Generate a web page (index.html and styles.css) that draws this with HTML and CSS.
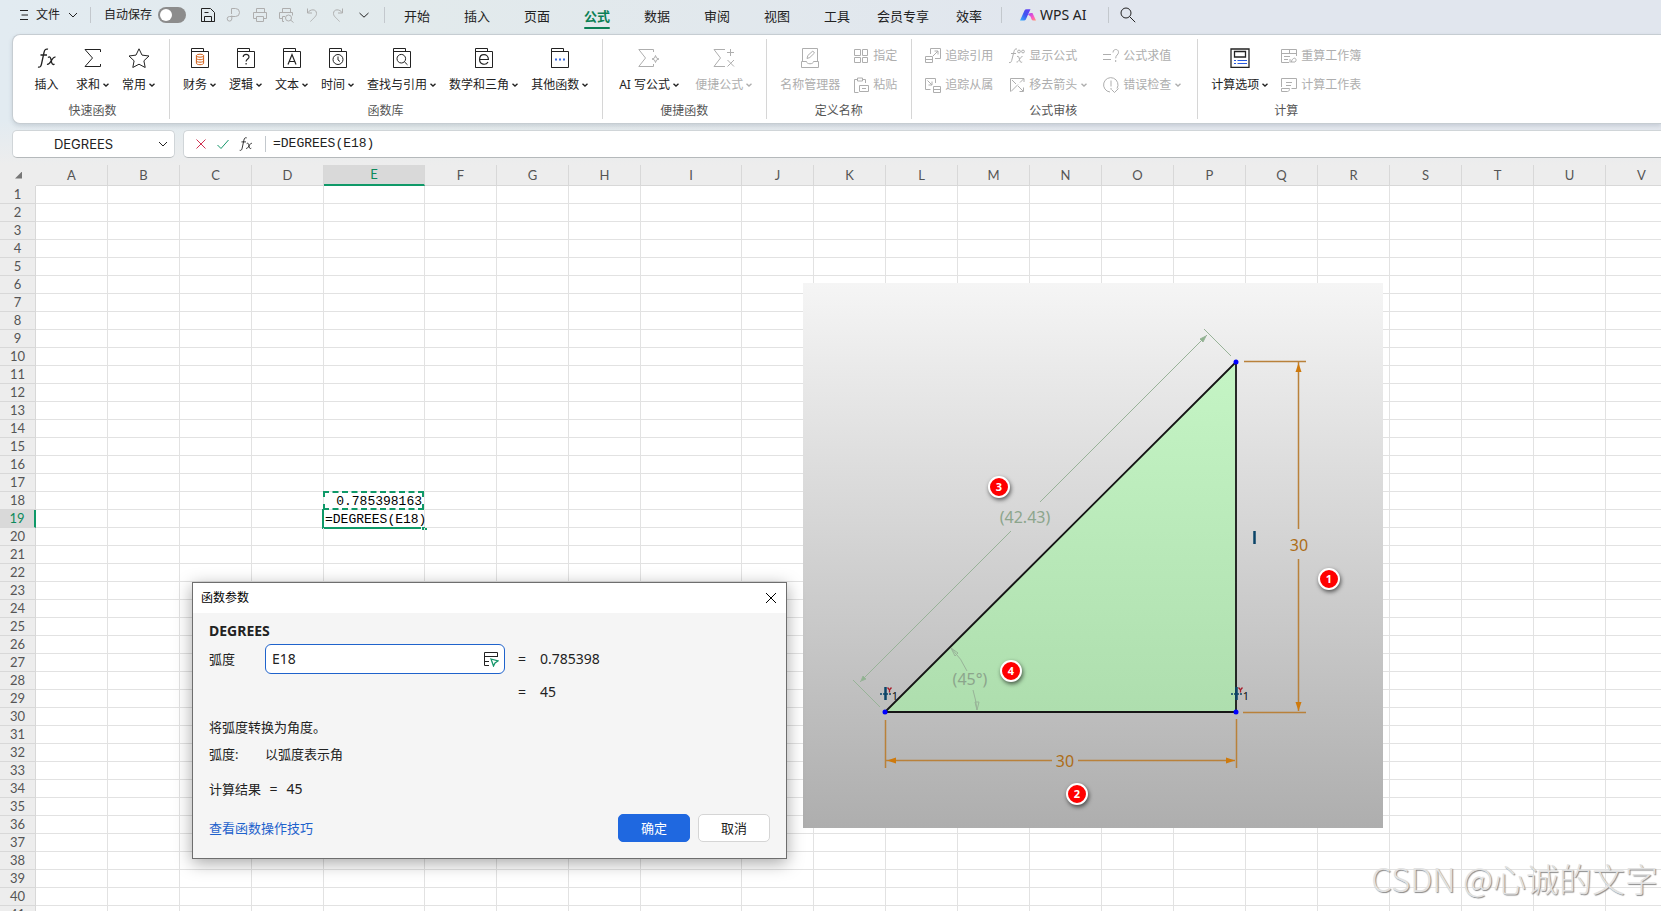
FILE: index.html
```html
<!DOCTYPE html>
<html lang="zh-CN">
<head>
    <meta charset="UTF-8">
    <meta name="viewport" content="width=device-width, initial-scale=1.0">
    <title>WPS 表格</title>
    <link rel="stylesheet" href="styles.css">
</head>
<body>

    <!-- Icon sprite -->
    <svg class="sprite" aria-hidden="true">
        <symbol id="i-down" viewBox="0 0 10 6"><path d="M1 1l4 4 4-4"/></symbol>
        <symbol id="i-caret" viewBox="0 0 6 4"><path d="M.5 .8L3 3 5.5 .8" stroke-width="1.4"/></symbol>
        <symbol id="i-book" viewBox="0 0 20 20"><path d="M1.500 19.500V.5h12v3M1.500 3.500h17v16h-17z"/></symbol>
        <symbol id="i-sigma" viewBox="0 0 20 20"><path d="M17.500 4V1.500H2L9.500 10 2 18.500h15.500V16"/></symbol>
        <symbol id="i-fx" viewBox="0 0 20 20"><path d="M1 19c2 .6 3-.6 3.500-3L7 4.500C7.500 2 8.600.5 11 1.200M3.500 7h6.500M11 9.500c2-1.500 2.700 0 3.200 3 .5 3 1.300 5 3.300 3.500M18.500 9.200c-1.500-.6-2.500.6-4.300 3.600-1.600 2.700-2.500 4-4.200 3.400" stroke-width="1.300"/></symbol>
    </svg>

    <!-- Menu bar -->
    <header class="menubar">
        <button class="file-btn">
            <svg class="ic-menu" viewBox="0 0 8 12"><path d="M0 1.500h8M1.500 6H8M0 10.500h8"/></svg>
            文件
            <svg class="ic-down" viewBox="0 0 10 6"><use href="#i-down"/></svg>
        </button>
        <span class="divider"></span>
        <label class="autosave">自动保存 <input type="checkbox" class="switch"></label>
        <div class="quick">
            <button aria-label="保存"><svg viewBox="0 0 16 16"><path d="M1.500 14.500v-13h9l4 4v9zM4.500 14v-4.500h7V14M4.500 5.500h4M1.500 14.500h13"/></svg></button>
            <button aria-label="导出" disabled><svg viewBox="0 0 16 16"><path d="M5.500 7V1.500h4a3.500 3.500 0 010 8h-6a2.300 2.300 0 102.300 2.500V8.500"/></svg></button>
            <button aria-label="打印" disabled><svg viewBox="0 0 16 16"><path d="M4.500 5V1.500h8V5M4 11.500H1.500v-6h13v6H12M4.500 9.500h7v5h-7z"/></svg></button>
            <button aria-label="打印预览" disabled><svg viewBox="0 0 16 16"><path d="M4.500 5V1.500h8V5M4.500 11.500h-3v-6h13v3M6 14.500H4.500v-5H7"/><circle cx="10.500" cy="11" r="3"/><path d="M12.500 13l3 2.500"/></svg></button>
            <button aria-label="撤销" disabled><svg viewBox="0 0 16 16"><path d="M3.500 1.500v4.500H8M3.700 5.800C6 2 12.500 1.500 12.500 6.500c0 3-3.500 5-6 8"/></svg></button>
            <button aria-label="恢复" disabled><svg viewBox="0 0 16 16"><path d="M12.500 1.500v4.500H8M12.300 5.800C10 2 3.500 1.500 3.500 6.500c0 3 3.500 5 6 8"/></svg></button>
            <button aria-label="更多"><svg viewBox="0 0 16 16"><path d="M3.500 6L8 10.200 12.500 6"/></svg></button>
        </div>
        <span class="divider"></span>
        <nav class="tabs">
            <button>开始</button>
            <button>插入</button>
            <button>页面</button>
            <button class="active">公式</button>
            <button>数据</button>
            <button>审阅</button>
            <button>视图</button>
            <button>工具</button>
            <button>会员专享</button>
            <button>效率</button>
        </nav>
        <span class="divider"></span>
        <button class="ai-btn">
            <svg viewBox="0 0 16 12">
                <defs>
                    <linearGradient id="ai1" x1="0" y1="1" x2="1" y2="0"><stop offset="0" stop-color="#36b4ff"/><stop offset=".5" stop-color="#3f55f0"/><stop offset="1" stop-color="#6a3df5"/></linearGradient>
                    <linearGradient id="ai2" x1="0" y1="0" x2="1" y2="1"><stop offset="0" stop-color="#a43df5"/><stop offset=".6" stop-color="#ff5cc0"/><stop offset="1" stop-color="#ff9a6a"/></linearGradient>
                </defs>
                <path d="M0 11.500L4.500 1.500Q5 .3 6.500.3h4L5.800 10.500q-.5 1-1.800 1z" fill="url(#ai1)" stroke="none"/>
                <path d="M8 5.500q1-1.500 3-1.500h1.500L16 11.500h-2.500q-1.500 0-2-1.300L10.500 7.500z" fill="url(#ai2)" stroke="none"/>
            </svg>
            WPS AI
        </button>
        <span class="divider"></span>
        <button class="search-btn" aria-label="搜索"><svg viewBox="0 0 16 16"><circle cx="6" cy="6" r="5"/><path d="M9.700 9.700l5.500 5.500"/></svg></button>
    </header>

    <!-- Ribbon -->
    <section class="ribbon">
        <div class="group">
            <div class="group-items">
                <button class="big"><svg class="ic"><use href="#i-fx"/></svg><span>插入</span></button>
                <button class="big"><svg class="ic"><use href="#i-sigma"/></svg><span>求和<svg class="caret"><use href="#i-caret"/></svg></span></button>
                <button class="big"><svg class="ic wide-ic" viewBox="0 0 22 20"><path d="M11 .8l3 6.300 7 .9-5.100 4.800 1.300 6.700L11 16.200l-6.200 3.300 1.300-6.700L1 8l7-.9z"/></svg><span>常用<svg class="caret"><use href="#i-caret"/></svg></span></button>
            </div>
            <div class="group-name">快速函数</div>
        </div>
        <div class="group">
            <div class="group-items">
                <button class="big"><svg class="ic" viewBox="0 0 20 20"><use href="#i-book"/><g stroke="#d2601a"><ellipse cx="10" cy="7.700" rx="3.600" ry="1.500"/><path d="M6.400 7.700v7.500c0 2 7.200 2 7.200 0V7.700M6.400 10.200c0 2 7.200 2 7.200 0M6.400 12.700c0 2 7.200 2 7.200 0"/></g></svg><span>财务<svg class="caret"><use href="#i-caret"/></svg></span></button>
                <button class="big"><svg class="ic" viewBox="0 0 20 20"><use href="#i-book"/><path d="M7.200 9c0-3.500 5.800-3.500 5.800 0 0 2-2.900 2-2.900 4.500M10.100 15v1.500" stroke-width="1.200"/></svg><span>逻辑<svg class="caret"><use href="#i-caret"/></svg></span></button>
                <button class="big"><svg class="ic" viewBox="0 0 20 20"><use href="#i-book"/><path d="M6 16.500l4-10 4 10M7.300 13.500h5.400" stroke-width="1.200"/></svg><span>文本<svg class="caret"><use href="#i-caret"/></svg></span></button>
                <button class="big"><svg class="ic" viewBox="0 0 20 20"><use href="#i-book"/><circle cx="10" cy="11.500" r="5"/><path d="M10 8.500v3.500l2 1.500"/></svg><span>时间<svg class="caret"><use href="#i-caret"/></svg></span></button>
                <button class="big"><svg class="ic" viewBox="0 0 20 20"><use href="#i-book"/><circle cx="9.300" cy="10.700" r="4.300"/><path d="M12.400 13.800l3.100 3"/></svg><span>查找与引用<svg class="caret"><use href="#i-caret"/></svg></span></button>
                <button class="big"><svg class="ic" viewBox="0 0 20 20"><use href="#i-book"/><path d="M5.600 11.500h8.800c0-6.500-8.800-6.500-8.800 0 0 5.500 6.500 6 8.400 2.500" stroke-width="1.200"/></svg><span>数学和三角<svg class="caret"><use href="#i-caret"/></svg></span></button>
                <button class="big"><svg class="ic" viewBox="0 0 20 20"><use href="#i-book"/><path d="M5 11.500h2m2 0h2m2 0h2" stroke="#3b6be0" stroke-width="2"/></svg><span>其他函数<svg class="caret"><use href="#i-caret"/></svg></span></button>
            </div>
            <div class="group-name">函数库</div>
        </div>
        <div class="group">
            <div class="group-items">
                <button class="big ai-write"><svg class="ic wide-ic off" viewBox="0 0 22 20"><path d="M15.500 4V1.500H.8L7.500 10 .8 18.500h14.700V16M17.500 7.500l1 2.500 2.500 1-2.500 1-1 2.500-1-2.500-2.500-1 2.500-1z"/></svg><span>AI 写公式<svg class="caret"><use href="#i-caret"/></svg></span></button>
                <button class="big" disabled><svg class="ic wide-ic" viewBox="0 0 22 20"><path d="M12 1.500H1L7.500 10 1 18.500h11M17.500 1v7M14 4.500h7M14.500 12l6.500 6.500M21 12l-6.500 6.500"/></svg><span>便捷公式<svg class="caret"><use href="#i-caret"/></svg></span></button>
            </div>
            <div class="group-name">便捷函数</div>
        </div>
        <div class="group">
            <div class="group-items">
                <button class="big" disabled><svg class="ic" viewBox="0 0 20 20"><path d="M2.500 13V.5h15V13M1.500 13.500h5c0 3 7 3 7 0h5v6h-17zM7 10.500l.8-3 5-4.500 1.700 2-4.700 4.500z"/></svg><span>名称管理器</span></button>
                <div class="stack">
                    <button class="small" disabled><svg viewBox="0 0 16 16"><path d="M1.500 1.500h6v6h-6zM9.500 1.500h5v6h-5zM1.500 9.500h6v5h-6zM9.500 9.500h5v5h-5z"/></svg>指定</button>
                    <button class="small" disabled><svg viewBox="0 0 16 16"><path d="M5.500 15.500h-4v-13h3M4.500 1h5v3h-5zM10 2.500h2.500V6M6.500 8.500h9v6h-9zM9 11.500h4"/></svg>粘贴</button>
                </div>
            </div>
            <div class="group-name">定义名称</div>
        </div>
        <div class="group audit">
            <div class="group-items">
                <div class="stack">
                    <button class="small" disabled><svg viewBox="0 0 16 16"><path d="M5.500 6V.5h10v10H10M.5 8.500h7v6h-7zM.5 11.500h7M8 8l5-5M9.500 3H13v3.500"/></svg>追踪引用</button>
                    <button class="small" disabled><svg viewBox="0 0 16 16"><path d="M5.500 12.500h-5V1.500h10V6M8.500 9.500h7v6h-7zM8.500 12.500h7M2.500 3.500l4.500 4.500M7 4.500V8H3.500"/></svg>追踪从属</button>
                </div>
                <div class="stack">
                    <button class="small" disabled><svg viewBox="0 0 16 16"><path d="M0 14.500c1.600.5 2.300-.5 2.700-2L5 3.500C5.500 1.500 6.300.6 8 1M2 5.500h5M8 8.500c1.800-.8 2 .8 2.500 3s1 3.500 2.700 2.500M13.500 8.500c-2-.5-4 6.500-6 5.500"/><circle cx="10" cy="3.500" r="1.400"/><circle cx="14" cy="3.500" r="1.400"/></svg>显示公式</button>
                    <button class="small" disabled><svg viewBox="0 0 16 16"><path d="M15 1.500H1.500v13M3 3l4 4M9 9l5 5M14.500 10.500v4h-4M14.500 2L11 5.500M9 7.500L2 14.500M15 5V1.500"/></svg>移去箭头<svg class="caret"><use href="#i-caret"/></svg></button>
                </div>
                <div class="stack">
                    <button class="small" disabled><svg viewBox="0 0 16 16"><path d="M0 6.500h8M0 11.500h8M10 4.500C10 .5 15.500.5 15.500 4.300c0 2.700-2.800 2.500-2.800 6M12.700 12v2"/></svg>公式求值</button>
                    <button class="small" disabled><svg viewBox="0 0 16 16"><path d="M7 15A7.200 7.200 0 1114 11.500M8 3.500v6M8 11v1.500M8.500 12.500l3 3 4-4"/></svg>错误检查<svg class="caret"><use href="#i-caret"/></svg></button>
                </div>
            </div>
            <div class="group-name">公式审核</div>
        </div>
        <div class="group">
            <div class="group-items">
                <button class="big"><svg class="ic" viewBox="0 0 20 20"><path d="M1 1h18v18.500H1zM4.500 3.500h11v5.500h-11z" stroke-width="1.300"/><path d="M4 12.500h2m1.500 0H17M4 15.500h2m1.500 0H17" stroke="#2a5be0"/></svg><span>计算选项<svg class="caret"><use href="#i-caret"/></svg></span></button>
                <div class="stack">
                    <button class="small" disabled><svg viewBox="0 0 16 16"><path d="M8 14.500H.5V1.500h15V8M.5 5.500h15M8.500 1.500v4M3 8.500h6M3 11.500h4M9.500 14h4.500c2-1 1-5-1.500-3.500-1.500 1-2 2-2 3.500M9 11v3.500"/></svg>重算工作簿</button>
                    <button class="small" disabled><svg viewBox="0 0 16 16"><path d="M.5 10V1.500h15v10h-5M.5 11.500h8c0 1.500-.5 3-2 3h-6zM5 5.500h6M5 8.500h5"/></svg>计算工作表</button>
                </div>
            </div>
            <div class="group-name">计算</div>
        </div>
    </section>

    <!-- Formula bar -->
    <section class="formula-row">
        <button class="name-box"><span>DEGREES</span><svg class="ic-down" viewBox="0 0 10 6"><use href="#i-down"/></svg></button>
        <div class="formula-bar">
            <button aria-label="取消输入"><svg viewBox="0 0 12 12" class="red"><path d="M1.500 1.500l9 9M10.500 1.500l-9 9"/></svg></button>
            <button aria-label="确认输入"><svg viewBox="0 0 12 12" class="green"><path d="M.5 7l3.500 3.500L11.500 2"/></svg></button>
            <button aria-label="插入函数"><svg viewBox="0 0 20 20" class="fx"><use href="#i-fx"/></svg></button>
            <span class="divider"></span>
            <input type="text" aria-label="公式" value="=DEGREES(E18)">
        </div>
    </section>

    <!-- Worksheet -->
    <main class="workspace">
        <table class="sheet">
            <colgroup id="cols"></colgroup>
            <thead id="sheet-head"></thead>
            <tbody id="sheet-body"></tbody>
        </table>

        <!-- Picture placed on the sheet -->
        <svg class="drawing" viewBox="0 0 580 545">
            <defs>
                <linearGradient id="bg" x1="0" y1="0" x2="0" y2="1"><stop offset="0" stop-color="#f5f5f5"/><stop offset="1" stop-color="#aeaeae"/></linearGradient>
                <linearGradient id="fill" x1="0" y1="0" x2="0" y2="1"><stop offset="0" stop-color="#c5f5c5"/><stop offset="1" stop-color="#aedeae"/></linearGradient>
            </defs>
            <rect width="580" height="545" fill="url(#bg)" stroke="none"/>
            <path d="M82 429L433 79V429z" fill="url(#fill)" stroke="#151515" stroke-width="1.800"/>

            <g class="dim-ref">
                <path d="M57 399L208 248M237 219L404 52M401 46l27 27M50 397l27 27"/>
                <path d="M403 53l-6 3 3 3zM58 398l2-5 3 3z" fill="#8fb48f"/>
                <path d="M148 365q11 11 16 23M170 407q3 10 4 20M148 365l4 8 3-3zM174 427l-2-8h4z"/>
            </g>
            <g class="dim">
                <path d="M441 78.500h62M440 429.500h63M495.500 79v167M495.500 276v152M82.500 437v48M433.500 436v49M83 477.500h166M275 477.500h157"/>
                <path d="M495.500 80l3 9h-6zM495.500 428l3-9h-6zM84 477.500l9-3v6zM432 477.500l-9-3v6z" fill="#cf7a0c" stroke="none"/>
            </g>

            <text x="222" y="240" class="ref-text">(42.43)</text>
            <text x="167" y="402" class="ref-text">(45°)</text>
            <text x="496" y="268" class="dim-text">30</text>
            <text x="262" y="484" class="dim-text">30</text>

            <g class="constraint">
                <path d="M451.500 248v13M82.500 404v13M433.500 404v13" stroke-width="2.500"/>
                <path d="M77 411h12M428 411h12" stroke-width="1.500" stroke-dasharray="2 1"/>
            </g>
            <g stroke="#a81e2c" fill="none" stroke-width="1.300">
                <path d="M84.500 404.500l2 2.500 2-2.500M86.500 407v2.500M435.500 404.500l2 2.500 2-2.500M437.500 407v2.500"/>
            </g>
            <text x="92" y="417" class="one">1</text>
            <text x="443" y="417" class="one">1</text>
            <g fill="#0000ff" stroke="none"><circle cx="433" cy="79" r="2.500"/><circle cx="82" cy="429" r="2.500"/><circle cx="433" cy="429" r="2.500"/></g>

            <g class="badge">
                <circle cx="526" cy="296" r="10"/><text x="526" y="300">1</text>
                <circle cx="274" cy="511" r="10"/><text x="274" y="515">2</text>
                <circle cx="196" cy="204" r="10"/><text x="196" y="208">3</text>
                <circle cx="208" cy="388" r="10"/><text x="208" y="392">4</text>
            </g>
        </svg>

        <!-- Function arguments dialog -->
        <form class="dialog" role="dialog" aria-labelledby="dialog-title">
            <div class="dialog-title">
                <span id="dialog-title">函数参数</span>
                <button type="button" aria-label="关闭"><svg viewBox="0 0 12 12"><path d="M1 1l10 10M11 1L1 11"/></svg></button>
            </div>
            <div class="dialog-body">
                <h2>DEGREES</h2>
                <div class="arg">
                    <label for="radian">弧度</label>
                    <div class="arg-input">
                        <input id="radian" type="text" value="E18">
                        <button type="button" aria-label="选择区域"><svg viewBox="0 0 16 16"><path d="M6 14.500H1.500v-13h13V6M1.500 5.500h13M1.500 10.500H6"/><path d="M8 8l7 2-3 2-1.500 3z" stroke="#15966a" stroke-width="1.300"/></svg></button>
                    </div>
                    <span>=</span>
                    <span>0.785398</span>
                </div>
                <div class="arg total"><span>=</span><span>45</span></div>
                <p class="desc">将弧度转换为角度。</p>
                <p class="arg-desc"><span>弧度:</span>以弧度表示角</p>
                <p class="outcome">计算结果 <span>=</span><span>45</span></p>
                <div class="dialog-footer">
                    <a href="#">查看函数操作技巧</a>
                    <button type="button" class="btn primary">确定</button>
                    <button type="button" class="btn">取消</button>
                </div>
            </div>
        </form>

        <div class="watermark">CSDN @心诚的文字</div>
    </main>

    <script src="script.js"></script>
</body>
</html>
```
FILE: styles.css
```css
* {
    box-sizing: border-box;
}

body {
    margin: 0;
    height: 100vh;
    display: flex;
    flex-direction: column;
    overflow: hidden;
    background: linear-gradient(to bottom, transparent 120px, #ededed 165px), linear-gradient(to right, #e2ebf1, #e2eaec 25%, #e1e6ee 65%);
    font-family: "Noto Sans", "Noto Sans CJK SC", sans-serif;
    font-size: 12px;
    line-height: 16px;
    color: #222;
}

button,
input {
    font: inherit;
    color: inherit;
}

button {
    padding: 0;
    border: none;
    background: none;
    white-space: nowrap;
}

svg {
    display: block;
    flex: none;
    fill: none;
    stroke: currentColor;
    stroke-width: 1;
}

.sprite {
    position: absolute;
    width: 0;
    height: 0;
}

/* Menu bar */
.menubar {
    display: flex;
    align-items: center;
    height: 34px;
    padding: 0 20px 4px;
    flex: none;
}

.divider {
    width: 1px;
    height: 16px;
    background: #c3c8cd;
    flex: none;
}

.file-btn {
    display: flex;
    align-items: center;
    gap: 8px;
    margin-right: 12px;
}

.ic-menu {
    width: 8px;
    height: 12px;
}

.ic-down {
    width: 10px;
    height: 6px;
}

.autosave {
    display: flex;
    align-items: center;
    gap: 6px;
    margin: 0 14px 0 13px;
}

.switch {
    appearance: none;
    width: 28px;
    height: 16px;
    margin: 0;
    padding: 2px;
    border-radius: 8px;
    background: #8c8c8c;
}

.switch::before {
    content: "";
    display: block;
    width: 12px;
    height: 12px;
    border-radius: 50%;
    background: #fff;
}

.quick {
    display: flex;
    gap: 10px;
    margin-right: 12px;
}

.quick svg,
.search-btn svg {
    width: 16px;
    height: 16px;
}

button:disabled {
    color: #aeaeae;
}

.tabs {
    display: flex;
    height: 30px;
    margin: 0 2px;
}

.tabs button {
    position: relative;
    min-width: 60px;
    padding: 2px 10px 0;
    font-size: 13px;
}

.tabs .active {
    font-weight: bold;
    color: #0a8055;
}

.tabs .active::after {
    content: "";
    position: absolute;
    left: 17px;
    right: 17px;
    bottom: 1px;
    height: 2px;
    border-radius: 1px;
    background: #0a8055;
}

.ai-btn {
    display: flex;
    align-items: center;
    gap: 4px;
    margin: 0 21px 0 18px;
    font-size: 14px;
}

.ai-btn svg {
    width: 16px;
    height: 12px;
}

.search-btn {
    margin-left: 11px;
}

/* Ribbon */
.ribbon {
    display: flex;
    flex: none;
    margin-left: 12px;
    padding-left: 4px;
    background: #fff;
    border: 1px solid #c6cdd2;
    border-right: none;
    border-radius: 8px 0 0 8px;
    box-shadow: 0 2px 4px rgba(90, 105, 120, 0.2);
}

.group {
    margin: 4px 0;
    padding: 9px 14px 0 13px;
    border-right: 1px solid #d6d6d6;
}

.group:last-child {
    border-right: none;
}

.group-items {
    display: flex;
    gap: 13px;
}

.audit {
    padding-right: 16px;
}

.audit .group-items {
    gap: 16px;
}

.group-name {
    margin-top: 10px;
    text-align: center;
    color: #555;
}

.big {
    display: flex;
    flex-direction: column;
    align-items: center;
    gap: 9px;
    min-width: 33px;
}

.big span {
    display: flex;
    align-items: center;
    gap: 3px;
}

.ai-write {
    min-width: 66px;
}

.ic {
    width: 20px;
    height: 20px;
}

.wide-ic {
    width: 22px;
}

.off {
    color: #aeaeae;
}

.caret {
    width: 6px;
    height: 4px;
}

.stack {
    display: flex;
    flex-direction: column;
    justify-content: space-between;
    height: 45px;
}

.small {
    display: flex;
    align-items: center;
    gap: 4px;
}

.small > svg:first-child {
    width: 16px;
    height: 16px;
}

/* Formula bar */
.formula-row {
    display: flex;
    flex: none;
    gap: 8px;
    padding: 6px 0 7px 12px;
}

.name-box,
.formula-bar {
    height: 28px;
    background: #fff;
    border: 1px solid #d0d5d8;
    border-bottom-color: #b5b9bb;
    border-radius: 5px;
}

.name-box {
    display: flex;
    align-items: center;
    width: 163px;
    padding-right: 6px;
    font-family: Inter, sans-serif;
    font-size: 13px;
}

.name-box span {
    flex: 1;
    padding-right: 4px;
}

.formula-bar {
    display: flex;
    align-items: center;
    flex: 1;
    padding-left: 11px;
    border-right: none;
    border-radius: 5px 0 0 5px;
}

.formula-bar button {
    margin-right: 10px;
}

.formula-bar .divider {
    margin-left: 2px;
}

.formula-bar svg {
    width: 12px;
    height: 12px;
}

.formula-bar .red {
    color: #d03050;
}

.formula-bar .green {
    color: #15966a;
}

.formula-bar .fx {
    width: 14px;
    height: 14px;
}

.formula-bar input {
    flex: 1;
    padding: 0 7px;
    border: none;
    outline: none;
    background: none;
    font-family: "Liberation Mono", monospace;
    font-size: 13px;
}

/* Worksheet */
.workspace {
    position: relative;
    flex: 1;
    min-height: 0;
    overflow: hidden;
    background: #fff;
}

.sheet {
    table-layout: fixed;
    width: 1px;
    border-collapse: separate;
    border-spacing: 0;
}

.col {
    width: 72px;
}

.col-wide {
    width: 101px;
}

.col-head {
    width: 36px;
}

.sheet th,
.sheet td {
    height: 18px;
    padding: 0;
    border-right: 1px solid #e2e2e2;
    border-bottom: 1px solid #e2e2e2;
    line-height: 17px;
}

.sheet th {
    background: #ededed;
    border-color: #d8d8d8;
    font-family: Lato, sans-serif;
    font-size: 13px;
    font-weight: normal;
    color: #555;
}

.sheet thead th {
    height: 21px;
}

.sheet thead th:first-child {
    border-color: #ededed;
}

.corner {
    width: 7px;
    height: 7px;
    margin-left: 15px;
    background: #777;
    clip-path: polygon(100% 0, 100% 100%, 0 100%);
}

.sheet .selected {
    background: #d9d9d9;
    color: #0d8a5c;
}

.sheet thead .selected {
    border-bottom: 2px solid #0f9968;
}

.sheet tbody .selected {
    border-right: 2px solid #0f9968;
}

.sheet td {
    position: relative;
    font-family: "Liberation Mono", monospace;
    font-size: 13px;
    color: #000;
    white-space: nowrap;
}

.sheet .source,
.sheet .editing {
    padding: 2px 2px 0 1px;
    line-height: 15px;
}

.source {
    text-align: right;
}

.source::after {
    content: "";
    position: absolute;
    inset: -1px 0 -1px -1px;
    border: 2px dashed #0f9968;
}

.editing::before {
    content: "";
    position: absolute;
    inset: -1px 3px -2px -2px;
    border: solid #0f9968;
    border-width: 0 0 2px 2px;
}

.editing::after {
    content: "";
    position: absolute;
    right: -3px;
    bottom: -3px;
    width: 5px;
    height: 3px;
    background: #0f9968;
}

/* Picture */
.drawing {
    position: absolute;
    left: 803px;
    top: 118px;
    width: 580px;
    height: 545px;
}

.drawing text {
    stroke: none;
    text-anchor: middle;
    font-size: 16px;
}

.dim-ref {
    stroke: #98b398;
}

.dim {
    stroke: #b9813a;
    stroke-width: 1.5;
}

.drawing .ref-text {
    fill: #8ca58c;
}

.drawing .dim-text {
    fill: #ad6d18;
}

.constraint {
    stroke: #0b4468;
}

.drawing .one {
    fill: #111;
    font-size: 11px;
}

.badge circle {
    fill: #f00;
    stroke: #fff;
    stroke-width: 2;
    filter: drop-shadow(1px 2px 2px rgba(0, 0, 0, 0.6));
}

.drawing .badge text {
    fill: #fff;
    font-size: 11px;
    font-weight: bold;
}

/* Dialog */
.dialog {
    position: absolute;
    left: 192px;
    top: 417px;
    width: 595px;
    background: #f5f5f5;
    border: 1px solid #6e6e6e;
    box-shadow: 0 4px 16px rgba(0, 0, 0, 0.35);
    font-size: 13px;
    line-height: 20px;
}

.dialog-title {
    display: flex;
    align-items: center;
    justify-content: space-between;
    height: 30px;
    padding: 0 9px 0 8px;
    background: #fff;
    font-size: 12px;
    color: #000;
}

.dialog-title svg {
    width: 12px;
    height: 12px;
}

.dialog-body {
    padding: 8px 16px 16px;
}

.dialog h2 {
    margin: 0 0 3px;
    font-size: 14px;
    line-height: 20px;
}

.arg {
    display: flex;
    align-items: center;
}

.arg label,
.arg-desc span {
    display: inline-block;
    width: 56px;
}

.arg > span {
    width: 22px;
    font-size: 14px;
}

.arg-input {
    display: flex;
    align-items: center;
    width: 240px;
    height: 30px;
    margin-right: 13px;
    padding: 0 5px 0 6px;
    background: #fff;
    border: 1px solid #1f63cc;
    border-radius: 6px;
}

.arg-input input {
    flex: 1;
    min-width: 0;
    padding: 0;
    border: none;
    outline: none;
    background: none;
    font-size: 14px;
}

.arg-input svg {
    width: 16px;
    height: 16px;
}

.total {
    margin: 8px 0 15px;
    padding-left: 309px;
}

.dialog p {
    margin: 0;
}

.dialog .arg-desc {
    margin: 7px 0 15px;
}

.outcome span {
    margin-left: 5px;
    font-size: 14px;
}

.outcome span + span {
    margin-left: 9px;
}

.dialog-footer {
    display: flex;
    align-items: center;
    gap: 8px;
    margin-top: 15px;
}

.dialog-footer a {
    margin-right: auto;
    color: #1e62cc;
    text-decoration: none;
}

.btn {
    width: 72px;
    height: 28px;
    background: #fff;
    border: 1px solid #d5d5d5;
    border-radius: 5px;
}

.primary {
    background: #1f68e0;
    border-color: #1f68e0;
    color: #fff;
}

.watermark {
    position: absolute;
    right: 3px;
    bottom: 13px;
    font-family: "Noto Sans CJK SC", sans-serif;
    font-weight: 300;
    font-size: 33px;
    line-height: 40px;
    color: #e2e2e2;
    text-shadow: 1px 1px 1px #888;
    white-space: nowrap;
}
```
FILE: script.js
```js
const columns = 'ABCDEFGHIJKLMNOPQRSTUV'.split('');
const rowCount = 41;
const wide = ['E', 'I'];

// Cells that hold something
const cells = {
    E18: { text: '0.785398163', cls: 'source' },
    E19: { text: '=DEGREES(E18)', cls: 'editing' }
};

// Column widths and letters
document.getElementById('cols').innerHTML = '<col class="col-head">' +
    columns.map(c => `<col class="${wide.includes(c) ? 'col-wide' : 'col'}">`).join('');

document.getElementById('sheet-head').innerHTML = '<tr><th><div class="corner"></div></th>' +
    columns.map(c => `<th${c === 'E' ? ' class="selected"' : ''}>${c}</th>`).join('') + '</tr>';

// Rows
let rows = '';
for (let r = 1; r <= rowCount; r++) {
    rows += `<tr><th${r === 19 ? ' class="selected"' : ''}>${r}</th>`;
    columns.forEach(c => {
        const cell = cells[c + r];
        rows += cell ? `<td class="${cell.cls}">${cell.text}</td>` : '<td></td>';
    });
    rows += '</tr>';
}
document.getElementById('sheet-body').innerHTML = rows;
```
